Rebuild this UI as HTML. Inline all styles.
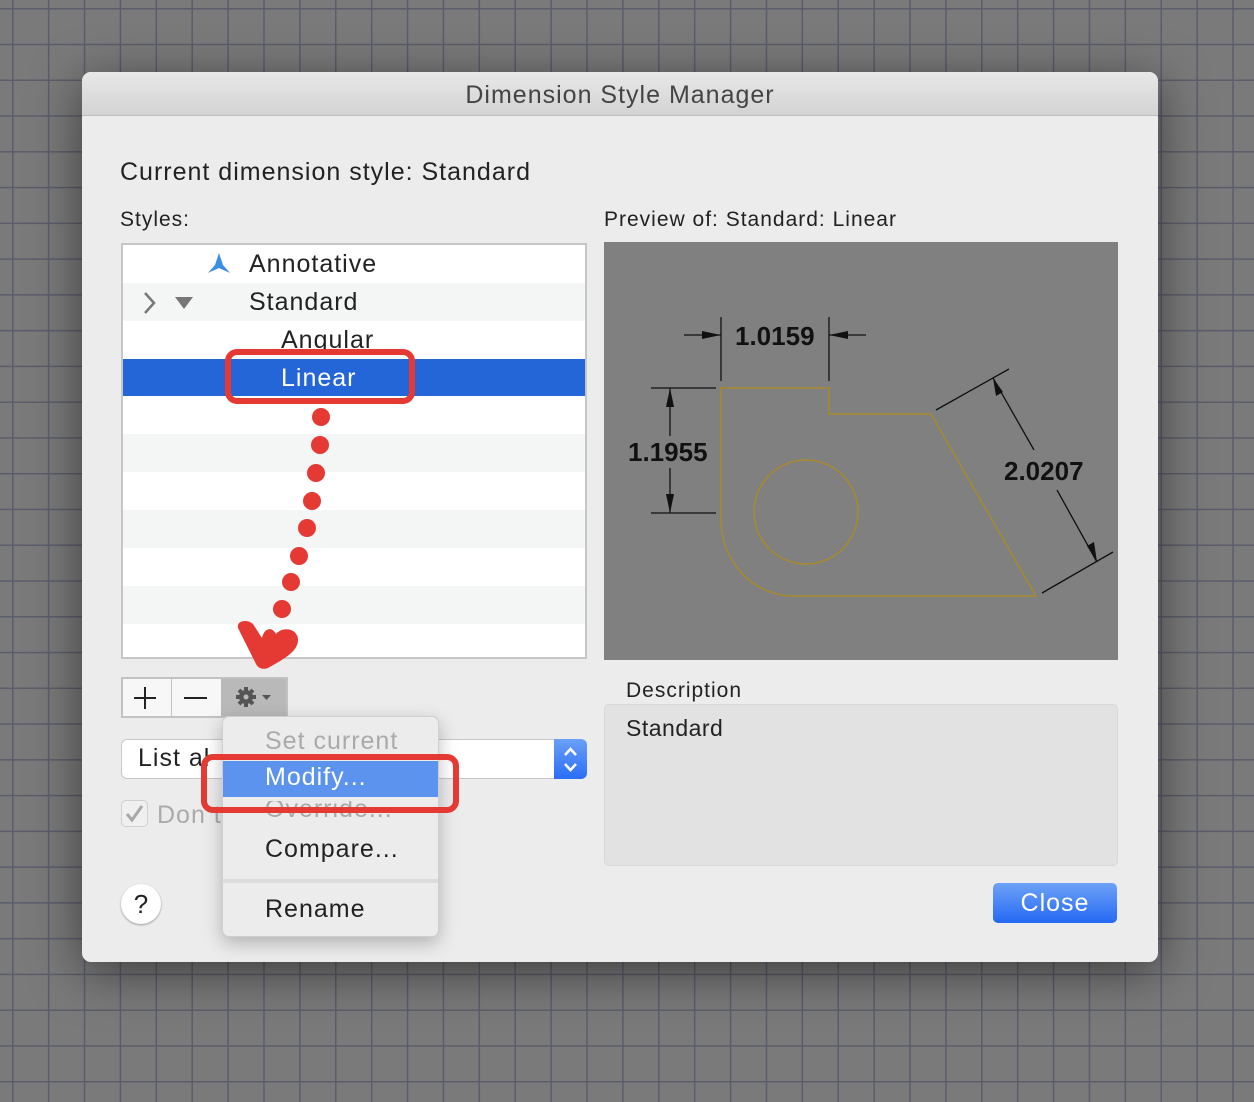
<!DOCTYPE html>
<html><head><meta charset="utf-8"><style>
*{margin:0;padding:0;box-sizing:border-box}
body{width:1254px;height:1102px;overflow:hidden;position:relative;font-family:"Liberation Sans",sans-serif;letter-spacing:1px;
background-color:#7a7a7a;
background-image:linear-gradient(to right,#5b5d6c 1.5px,transparent 1.5px),linear-gradient(to bottom,#5b5d6c 1.5px,transparent 1.5px);
background-size:35.9px 35.77px;background-position:12px 8px}
.win{position:absolute;left:82px;top:72px;width:1076px;height:890px;background:#ececec;border-radius:9px;box-shadow:0 10px 50px rgba(0,0,0,.5);overflow:hidden}
.title{height:44px;background:linear-gradient(#e8e8e8,#d3d3d3);border-bottom:1px solid #bdbdbd;text-align:center;line-height:46px;font-size:25px;color:#444}
.t{position:absolute;font-size:24px;color:#222;white-space:nowrap}
.list{position:absolute;left:121px;top:243px;width:466px;height:416px;border:2px solid #c6c6c6;background:#fff;overflow:hidden}
.row{height:38px;font-size:25px;line-height:38px;position:relative;color:#222}
.g{background:#f4f5f5}
.sel{background:#2466d8;color:#fff}
.abs{position:absolute}
</style></head><body>
<div class="win"><div class="title">Dimension Style Manager</div></div>
<div class="t" style="left:120px;top:158px;font-size:25px">Current dimension style: Standard</div>
<div class="t" style="left:120px;top:208px;font-size:21px">Styles:</div>
<div class="t" style="left:604px;top:208px;font-size:21px">Preview of: Standard: Linear</div>
<div class="list">
 <div class="row"><span class="abs" style="left:126px">Annotative</span>
  <svg class="abs" style="left:84px;top:8px" width="24" height="22"><path d="M12 0 L16 12 L23 20 L12 15 L1 20 L8 12 Z" fill="#3a8ee6"/></svg></div>
 <div class="row g"><span class="abs" style="left:126px">Standard</span>
  <svg class="abs" style="left:18px;top:9px" width="70" height="22"><path d="M4 1 L13 11 L4 21" stroke="#777" stroke-width="2.5" fill="none"/><path d="M34 5 L52 5 L43 17Z" fill="#777"/></svg></div>
 <div class="row"><span class="abs" style="left:158px">Angular</span></div>
 <div class="row sel" style="height:37px"><span class="abs" style="left:158px">Linear</span></div>
 <div class="row"></div><div class="row g"></div><div class="row"></div><div class="row g"></div><div class="row"></div><div class="row g"></div><div class="row"></div>
</div>
<div class="abs" style="left:121px;top:677px;width:167px;height:41px;border:2px solid #c2c2c2;background:#f7f7f7"></div>
<div class="abs" style="left:171px;top:679px;width:1px;height:37px;background:#c2c2c2"></div>
<div class="abs" style="left:221px;top:679px;width:65px;height:37px;background:#b9b9b9"></div>
<svg class="abs" style="left:121px;top:677px" width="167" height="41">
<path d="M24 10 V32 M13 21 H35" stroke="#222" stroke-width="2"/>
<path d="M63 21 H86" stroke="#222" stroke-width="2"/>
<g transform="translate(125,20)" fill="#555"><circle r="7"/><g stroke="#555" stroke-width="4"><path d="M0 -10V10M-10 0H10M-7 -7L7 7M7 -7L-7 7"/></g><circle r="2.5" fill="#b9b9b9"/></g>
<path d="M141 18 H150 L145.5 23Z" fill="#555"/>
</svg>
<div class="abs" style="left:121px;top:739px;width:466px;height:40px;border:1px solid #c8c8c8;border-radius:6px;background:#fff"></div>
<div class="abs" style="left:554px;top:739px;width:33px;height:40px;border-radius:0 6px 6px 0;background:linear-gradient(#6aa0f7,#2a6ef5)"></div>
<svg class="abs" style="left:554px;top:739px" width="33" height="40"><path d="M11 16 L16.5 10 L22 16 M11 25 L16.5 31 L22 25" stroke="#fff" stroke-width="2.5" fill="none"/></svg>
<div class="t" style="left:138px;top:744px;font-size:25px">List al</div>
<div class="abs" style="left:121px;top:800px;width:27px;height:27px;border:1px solid #d0d0d0;border-radius:5px;background:#f0f0f0"></div>
<svg class="abs" style="left:121px;top:800px" width="27" height="27"><path d="M6 14 L11 20 L21 6" stroke="#a8a8a8" stroke-width="3" fill="none"/></svg>
<div class="t" style="left:157px;top:801px;font-size:25px;color:#aaa">Don t</div>
<div class="abs" style="left:121px;top:884px;width:40px;height:40px;border-radius:50%;background:#fff;box-shadow:0 1px 2px rgba(0,0,0,.35);text-align:center;line-height:40px;font-size:26px;color:#222;letter-spacing:0">?</div>
<div class="abs" style="left:604px;top:242px;width:514px;height:418px;background:#808080"></div>
<svg class="abs" style="left:604px;top:242px" width="514" height="418" font-family="Liberation Sans" font-weight="bold" font-size="26" letter-spacing="0">
<g transform="translate(-604,-242)">
<path d="M721 388 H829 V414 H931 L1036 596 H794 A73 76 0 0 1 721 520 Z" fill="none" stroke="#a88a2c" stroke-width="1.5"/>
<circle cx="806" cy="512" r="52" fill="none" stroke="#a88a2c" stroke-width="1.5"/>
<g stroke="#111" stroke-width="1.3" fill="none">
<path d="M721 317 V381 M829 317 V381 M684 335 H721 M829 335 H866"/>
<path d="M651 388 H716 M651 513 H716 M670 388 V436 M670 468 V513"/>
<path d="M936 410 L1009 369 M1042 593 L1113 552 M993 378 L1034 450 M1057 490 L1097 562"/>
</g>
<g fill="#111"><path d="M721 335 L702 331 V339Z M829 335 L848 331 V339Z M670 388 L666 407 H674Z M670 513 L666 494 H674Z M993 378 L996 396 L1003 392Z M1097 562 L1087 546 L1094 542Z"/></g>
<text x="735" y="345" fill="#111">1.0159</text>
<text x="628" y="461" fill="#111">1.1955</text>
<text x="1004" y="480" fill="#111">2.0207</text>
</g></svg>
<div class="t" style="left:626px;top:679px;font-size:21px">Description</div>
<div class="abs" style="left:604px;top:704px;width:514px;height:162px;background:#e2e2e2;border:1px solid #d8d8d8;border-radius:5px"></div>
<div class="t" style="left:626px;top:715px;font-size:23px;letter-spacing:0.5px">Standard</div>
<div class="abs" style="left:993px;top:883px;width:124px;height:40px;border-radius:5px;background:linear-gradient(#6ea2f7,#2468f4);color:#fff;font-size:25px;text-align:center;line-height:40px">Close</div>
<div class="abs" style="left:222px;top:716px;width:217px;height:221px;background:#ececec;border:1px solid #cfcfcf;border-radius:7px;box-shadow:0 6px 18px rgba(0,0,0,.25);overflow:hidden">
 <div class="abs" style="left:42px;top:10px;font-size:25px;color:#aaa">Set current</div>
 <div class="abs" style="left:0;top:44px;width:217px;height:36px;background:#5b93ef"></div>
 <div class="abs" style="left:42px;top:46px;font-size:25px;color:#fff">Modify...</div>
 <div class="abs" style="left:42px;top:84px;font-size:25px;color:#aaa;height:22px;overflow:hidden"><span style="position:relative;top:-6px">Override...</span></div>
 <div class="abs" style="left:42px;top:118px;font-size:25px;color:#222">Compare...</div>
 <div class="abs" style="left:0;top:162px;width:217px;height:4px;background:#dcdcdc"></div>
 <div class="abs" style="left:42px;top:178px;font-size:25px;color:#222">Rename</div>
</div>
<div class="abs" style="left:225px;top:349px;width:190px;height:55px;border:6px solid #e53a33;border-radius:12px"></div>
<div class="abs" style="left:201px;top:754px;width:258px;height:59px;border:6px solid #e53a33;border-radius:12px"></div>
<svg class="abs" style="left:0;top:0" width="1254" height="1102">
<g fill="#e53a33">
<circle cx="321" cy="417" r="9"/><circle cx="320" cy="445" r="9"/><circle cx="316" cy="473" r="9"/><circle cx="312" cy="501" r="9"/><circle cx="307" cy="528" r="9"/><circle cx="299" cy="556" r="9"/><circle cx="291" cy="582" r="9"/><circle cx="282" cy="609" r="9"/>
<path d="M238 628 C236 620 248 619 253 624 L262 638 C264 628 272 626 276 634 C282 626 298 628 298 640 C298 652 282 660 268 668 C262 670 258 668 256 664 Z"/>
</g></svg>
</body></html>
